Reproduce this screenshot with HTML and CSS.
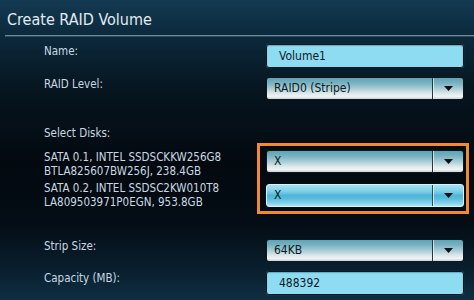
FILE: index.html
```html
<!DOCTYPE html>
<html>
<head>
<meta charset="utf-8">
<link rel="stylesheet" href="styles.css">
</head>
<body>
<div class="page">
  <h1 class="title">Create RAID Volume</h1>
  <div class="sep"></div>
  <div class="form">
    <div class="row row-first">
      <span class="label">Name:</span>
      <div class="input">Volume1</div>
    </div>
    <div class="row row-gap">
      <span class="label">RAID Level:</span>
      <div class="select"><span class="select-text">RAID0 (Stripe)</span><span class="select-btn"><svg width="9" height="5" viewBox="0 0 9 5"><path d="M0 0H9L4.5 5Z" fill="#0b0f12"/></svg></span></div>
    </div>
    <div class="section-label">Select Disks:</div>
    <div class="disks">
      <div class="disk-labels">
        <div class="disk">SATA 0.1, INTEL SSDSCKKW256G8<br>BTLA825607BW256J, 238.4GB</div>
        <div class="disk">SATA 0.2, INTEL SSDSC2KW010T8<br>LA809503971P0EGN, 953.8GB</div>
      </div>
      <div class="highlight">
        <div class="select"><span class="select-text">X</span><span class="select-btn"><svg width="9" height="5" viewBox="0 0 9 5"><path d="M0 0H9L4.5 5Z" fill="#0b0f12"/></svg></span></div>
        <div class="select select-active"><span class="select-text">X</span><span class="select-btn"><svg width="9" height="5" viewBox="0 0 9 5"><path d="M0 0H9L4.5 5Z" fill="#0b0f12"/></svg></span></div>
      </div>
    </div>
    <div class="row row-strip">
      <span class="label">Strip Size:</span>
      <div class="select"><span class="select-text">64KB</span><span class="select-btn"><svg width="9" height="5" viewBox="0 0 9 5"><path d="M0 0H9L4.5 5Z" fill="#0b0f12"/></svg></span></div>
    </div>
    <div class="row row-gap">
      <span class="label">Capacity (MB):</span>
      <div class="input">488392</div>
    </div>
  </div>
</div>
</body>
</html>
```

FILE: styles.css
```css
html, body {
  margin: 0;
  padding: 0;
}
body {
  width: 474px;
  height: 300px;
  overflow: hidden;
  font-family: "DejaVu Sans Condensed", "DejaVu Sans", sans-serif;
  font-stretch: condensed;
  background: linear-gradient(to bottom, #133a52 0%, #0c2a3d 11%, #06151f 30%, #03090f 55%, #040d15 75%, #0a2232 92%, #0f2e42 100%);
}
.page {
  display: flex;
  flex-direction: column;
}
.title {
  margin: 0;
  padding: 10px 0 0 7px;
  font-size: 16px;
  line-height: 19px;
  font-weight: normal;
  color: #e2ebf1;
}
.sep {
  margin: 6px 0 0 5px;
  height: 0;
  border-top: 1px solid #6a8a9c;
  border-bottom: 1px solid #2f4a5c;
}
.form {
  display: flex;
  flex-direction: column;
  padding-left: 44px;
}
.row {
  display: grid;
  grid-template-columns: 222px 198px;
  align-items: start;
}
.row-first { margin-top: 7px; }
.row-gap { margin-top: 9px; }
.row-strip { margin-top: 25px; }
.label, .section-label, .disk {
  font-size: 11.5px;
  line-height: 14px;
  color: #c8d8e3;
}
.section-label { margin-top: 26px; }
.input {
  box-sizing: border-box;
  height: 24px;
  padding-left: 12px;
  border: 1px solid #0a161c;
  border-radius: 3px;
  background: #8ddcf2;
  box-shadow: inset 0 1px 1px rgba(60, 120, 140, 0.5), 0 0 1px rgba(120, 170, 190, 0.4);
  font-size: 12px;
  line-height: 22px;
  color: #0f1b22;
}
.select {
  box-sizing: border-box;
  height: 23px;
  display: flex;
  border: 1px solid #0c181e;
  border-radius: 3px;
  background: linear-gradient(to bottom, #5ea2b4 0%, #79b3c2 25%, #a9ccd5 50%, #dfe9ec 75%, #f0f3f3 88%, #c9d3d6 100%);
  font-size: 12px;
  line-height: 21px;
  color: #0f1b22;
  overflow: hidden;
}
.select-text {
  flex: 1;
  padding-left: 7px;
}
.select-btn {
  width: 30px;
  display: flex;
  align-items: center;
  justify-content: center;
  border-left: 1px solid #27373e;
  box-shadow: inset 1px 0 0 rgba(255, 255, 255, 0.6);
}
.select-active {
  border-color: #d8f2fa;
  background: linear-gradient(to bottom, #a2e2f3 0%, #7fd0e9 30%, #4fb5d8 50%, #5abcdd 65%, #8dd6ed 90%, #b0e6f5 100%);
}
.select-active .select-btn {
  border-left-color: #2c4a58;
}
.disks {
  margin-top: 3px;
  display: grid;
  grid-template-columns: 213px 212px;
}
.disk-labels {
  display: flex;
  flex-direction: column;
  gap: 4px;
  padding-top: 8px;
}
.disk { line-height: 13.5px; }
.highlight {
  display: flex;
  flex-direction: column;
  gap: 11px;
  padding: 4px 2px 4px 6px;
  border: 3px solid #f28b2b;
}
```
